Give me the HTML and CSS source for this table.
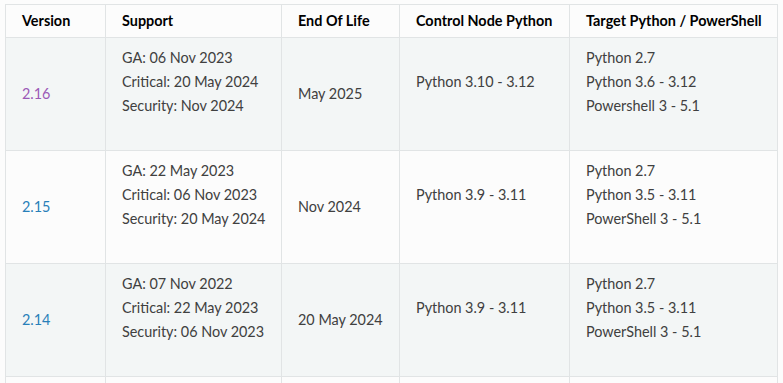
FILE: index.html
```html
<!DOCTYPE html>
<html>
<head>
<meta charset="utf-8">
<link rel="stylesheet" href="styles.css">
</head>
<body>
<div class="wrap">
<table class="docutils">
<colgroup>
<col class="c1"><col class="c2"><col class="c3"><col class="c4"><col class="c5">
</colgroup>
<thead>
<tr><th>Version</th><th>Support</th><th>End Of Life</th><th>Control Node Python</th><th>Target Python / PowerShell</th></tr>
</thead>
<tbody>
<tr class="odd">
<td><a class="visited" href="#">2.16</a></td>
<td><p>GA: 06 Nov 2023<br>Critical: 20 May 2024<br>Security: Nov 2024</p></td>
<td>May 2025</td>
<td><p>Python 3.10 - 3.12</p></td>
<td><p>Python 2.7<br>Python 3.6 - 3.12<br>Powershell 3 - 5.1</p></td>
</tr>
<tr class="even">
<td><a href="#">2.15</a></td>
<td><p>GA: 22 May 2023<br>Critical: 06 Nov 2023<br>Security: 20 May 2024</p></td>
<td>Nov 2024</td>
<td><p>Python 3.9 - 3.11</p></td>
<td><p>Python 2.7<br>Python 3.5 - 3.11<br>PowerShell 3 - 5.1</p></td>
</tr>
<tr class="odd">
<td><a href="#">2.14</a></td>
<td><p>GA: 07 Nov 2022<br>Critical: 22 May 2023<br>Security: 06 Nov 2023</p></td>
<td>20 May 2024</td>
<td><p>Python 3.9 - 3.11</p></td>
<td><p>Python 2.7<br>Python 3.5 - 3.11<br>PowerShell 3 - 5.1</p></td>
</tr>
<tr class="even stub">
<td></td><td></td><td></td><td></td><td></td>
</tr>
</tbody>
</table>
</div>
</body>
</html>
```

FILE: styles.css
```css
html, body {
  margin: 0;
  padding: 0;
  background: #fcfcfc;
  overflow: hidden;
}
.wrap {
  padding: 4px 0 0 5px;
}
.docutils {
  border-collapse: collapse;
  border-spacing: 0;
  table-layout: fixed;
  width: 772px;
  font-family: Lato, "Noto Sans", sans-serif;
  font-size: 14.4px;
  color: #404040;
  border: 1px solid #e1e4e5;
}
.c1 { width: 100px; }
.c2 { width: 176px; }
.c3 { width: 118px; }
.c4 { width: 170px; }
.c5 { width: 208px; }
.docutils th {
  text-align: left;
  font-weight: 700;
  color: #000;
  background: #fcfcfc;
  padding: 4px 16px;
  line-height: 24px;
  height: 32px;
  box-sizing: border-box;
  border: 1px solid #e1e4e5;
  white-space: nowrap;
}
.docutils td {
  padding: 8px 16px;
  line-height: 24px;
  vertical-align: middle;
  border: 1px solid #e1e4e5;
  white-space: nowrap;
}
.docutils td p {
  margin: 0 0 24px 0;
}
.stub td {
  height: 24px;
}
.odd td { background: #f3f6f6; }
.even td { background: #fcfcfc; }
.docutils a {
  color: #2980b9;
  text-decoration: none;
}
.docutils a.visited {
  color: #9b59b6;
}
```
